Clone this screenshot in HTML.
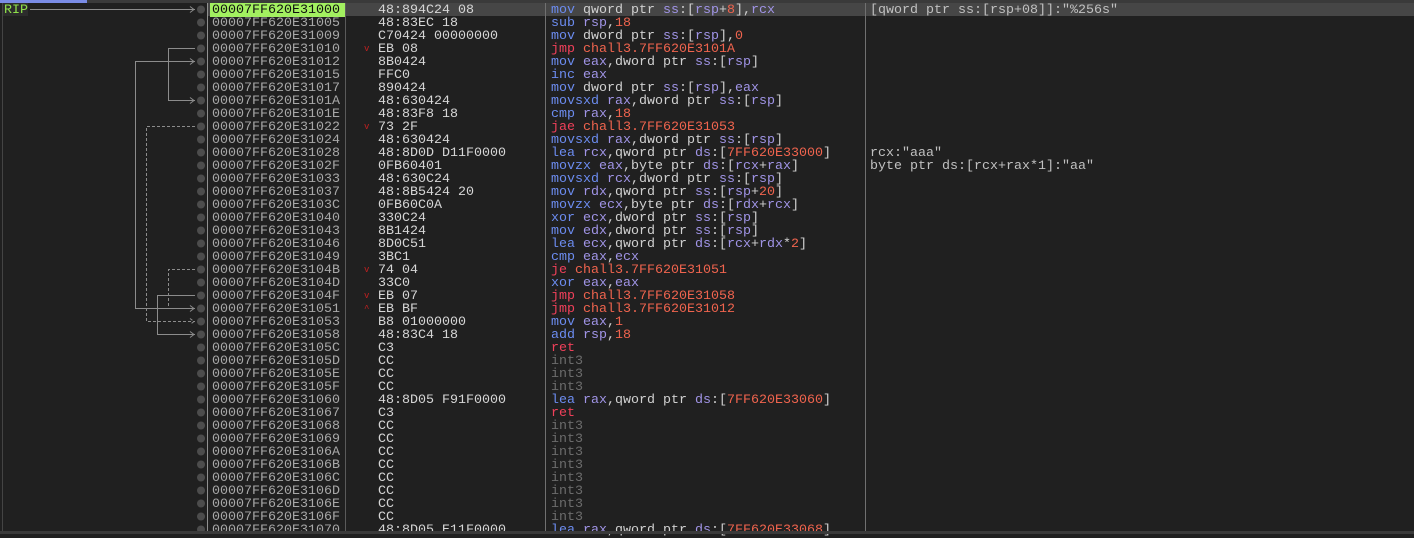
<!DOCTYPE html>
<html><head><meta charset="utf-8"><style>
*{margin:0;padding:0;box-sizing:border-box}
body{width:1414px;height:534px;background:#202020;overflow:hidden;position:relative;font-family:"Liberation Mono",monospace;font-size:13.33px;}
.row{position:absolute;left:0;width:1414px;height:13px;line-height:13px;white-space:pre}
.row>span{top:1px}
.a{position:absolute;left:212px;color:#a8a8a8}
.b{position:absolute;left:378px;color:#d6d6d6}
.d{position:absolute;left:551px;color:#d0d0d0}
.c{position:absolute;left:870px;color:#c0c0c0}
.mk{position:absolute;left:364px;color:#c02020;font-size:9px}
.m{color:#6c8cf0}.r{color:#a094e6}.n{color:#f0644e}.j{color:#f0405a}.i{color:#6c6c6c}.p{color:#d0d0d0}
.vl{position:absolute;top:3px;width:1px;height:529px;background:#5a5a5a}
</style></head><body>
<div style="position:absolute;left:0;top:0;width:1414px;height:3px;background:#3a3a3a"></div>
<div style="position:absolute;left:0;top:0;width:87px;height:3px;background:#7a8ce6"></div>
<div style="position:absolute;left:0;top:3px;width:1414px;height:13px;background:#464646"></div>
<div style="position:absolute;left:0;top:3px;width:207px;height:13px;background:#202020"></div>
<div style="position:absolute;left:3px;top:3px;width:25px;height:13px;background:#2c2c2c"></div>
<div style="position:absolute;left:210px;top:3px;width:135px;height:14px;background:#a2f060"></div>
<div class="vl" style="left:2px;background:#444"></div>
<div class="vl" style="left:207px;background:#909090"></div>
<div class="vl" style="left:345px"></div>
<div class="vl" style="left:545px;background:#707070"></div>
<div class="vl" style="left:865px;background:#707070"></div>
<div class="row" style="top:3px"><span style="position:absolute;left:4px;color:#8ee04a">RIP</span></div>
<svg width="207" height="534" style="position:absolute;left:0;top:0" fill="none" stroke="#8c8c8c" stroke-width="1">
<path d="M30 9.5H195M190 6.5l4 3-4 3"/>
<path d="M195 48.5H168.5V100.5H195M190 97.5l4 3-4 3"/>
<path d="M195 308.5H135.5V61.5H195M190 58.5l4 3-4 3M190 305.5l4 3-4 3"/>
<path d="M195 126.5H146.5V321.5H195M190 318.5l4 3-4 3" stroke-dasharray="3,2"/>
<path d="M195 269.5H168.5V308.5" stroke-dasharray="3,2"/>
<path d="M195 295.5H157.5V334.5H195M190 331.5l4 3-4 3"/>
</svg>
<svg width="10" height="534" style="position:absolute;left:197px;top:0">
<g fill="#4c4c4c">
<circle cx="4" cy="9.5" r="4"/><circle cx="4" cy="22.5" r="4"/><circle cx="4" cy="35.5" r="4"/><circle cx="4" cy="48.5" r="4"/><circle cx="4" cy="61.5" r="4"/><circle cx="4" cy="74.5" r="4"/><circle cx="4" cy="87.5" r="4"/><circle cx="4" cy="100.5" r="4"/><circle cx="4" cy="113.5" r="4"/><circle cx="4" cy="126.5" r="4"/><circle cx="4" cy="139.5" r="4"/><circle cx="4" cy="152.5" r="4"/><circle cx="4" cy="165.5" r="4"/><circle cx="4" cy="178.5" r="4"/><circle cx="4" cy="191.5" r="4"/><circle cx="4" cy="204.5" r="4"/><circle cx="4" cy="217.5" r="4"/><circle cx="4" cy="230.5" r="4"/><circle cx="4" cy="243.5" r="4"/><circle cx="4" cy="256.5" r="4"/><circle cx="4" cy="269.5" r="4"/><circle cx="4" cy="282.5" r="4"/><circle cx="4" cy="295.5" r="4"/><circle cx="4" cy="308.5" r="4"/><circle cx="4" cy="321.5" r="4"/><circle cx="4" cy="334.5" r="4"/><circle cx="4" cy="347.5" r="4"/><circle cx="4" cy="360.5" r="4"/><circle cx="4" cy="373.5" r="4"/><circle cx="4" cy="386.5" r="4"/><circle cx="4" cy="399.5" r="4"/><circle cx="4" cy="412.5" r="4"/><circle cx="4" cy="425.5" r="4"/><circle cx="4" cy="438.5" r="4"/><circle cx="4" cy="451.5" r="4"/><circle cx="4" cy="464.5" r="4"/><circle cx="4" cy="477.5" r="4"/><circle cx="4" cy="490.5" r="4"/><circle cx="4" cy="503.5" r="4"/><circle cx="4" cy="516.5" r="4"/><circle cx="4" cy="529.5" r="4"/>
</g></svg>

<div class="row" style="top:3px"><span class="a" style="color:#101010">00007FF620E31000</span><span class="b">48:894C24 08</span><span class="d"><span class="m">mov</span> qword ptr <span class="r">ss</span>:[<span class="r">rsp</span>+<span class="n">8</span>],<span class="r">rcx</span></span><span class="c">[qword ptr ss:[rsp+08]]:"%256s"</span></div>
<div class="row" style="top:16px"><span class="a">00007FF620E31005</span><span class="b">48:83EC 18</span><span class="d"><span class="m">sub</span> <span class="r">rsp</span>,<span class="n">18</span></span></div>
<div class="row" style="top:29px"><span class="a">00007FF620E31009</span><span class="b">C70424 00000000</span><span class="d"><span class="m">mov</span> dword ptr <span class="r">ss</span>:[<span class="r">rsp</span>],<span class="n">0</span></span></div>
<div class="row" style="top:42px"><span class="a">00007FF620E31010</span><span class="mk">v</span><span class="b">EB 08</span><span class="d"><span class="j">jmp</span> <span class="n">chall3.7FF620E3101A</span></span></div>
<div class="row" style="top:55px"><span class="a">00007FF620E31012</span><span class="b">8B0424</span><span class="d"><span class="m">mov</span> <span class="r">eax</span>,dword ptr <span class="r">ss</span>:[<span class="r">rsp</span>]</span></div>
<div class="row" style="top:68px"><span class="a">00007FF620E31015</span><span class="b">FFC0</span><span class="d"><span class="m">inc</span> <span class="r">eax</span></span></div>
<div class="row" style="top:81px"><span class="a">00007FF620E31017</span><span class="b">890424</span><span class="d"><span class="m">mov</span> dword ptr <span class="r">ss</span>:[<span class="r">rsp</span>],<span class="r">eax</span></span></div>
<div class="row" style="top:94px"><span class="a">00007FF620E3101A</span><span class="b">48:630424</span><span class="d"><span class="m">movsxd</span> <span class="r">rax</span>,dword ptr <span class="r">ss</span>:[<span class="r">rsp</span>]</span></div>
<div class="row" style="top:107px"><span class="a">00007FF620E3101E</span><span class="b">48:83F8 18</span><span class="d"><span class="m">cmp</span> <span class="r">rax</span>,<span class="n">18</span></span></div>
<div class="row" style="top:120px"><span class="a">00007FF620E31022</span><span class="mk">v</span><span class="b">73 2F</span><span class="d"><span class="j">jae</span> <span class="n">chall3.7FF620E31053</span></span></div>
<div class="row" style="top:133px"><span class="a">00007FF620E31024</span><span class="b">48:630424</span><span class="d"><span class="m">movsxd</span> <span class="r">rax</span>,dword ptr <span class="r">ss</span>:[<span class="r">rsp</span>]</span></div>
<div class="row" style="top:146px"><span class="a">00007FF620E31028</span><span class="b">48:8D0D D11F0000</span><span class="d"><span class="m">lea</span> <span class="r">rcx</span>,qword ptr <span class="r">ds</span>:[<span class="n">7FF620E33000</span>]</span><span class="c">rcx:"aaa"</span></div>
<div class="row" style="top:159px"><span class="a">00007FF620E3102F</span><span class="b">0FB60401</span><span class="d"><span class="m">movzx</span> <span class="r">eax</span>,byte ptr <span class="r">ds</span>:[<span class="r">rcx</span>+<span class="r">rax</span>]</span><span class="c">byte ptr ds:[rcx+rax*1]:"aa"</span></div>
<div class="row" style="top:172px"><span class="a">00007FF620E31033</span><span class="b">48:630C24</span><span class="d"><span class="m">movsxd</span> <span class="r">rcx</span>,dword ptr <span class="r">ss</span>:[<span class="r">rsp</span>]</span></div>
<div class="row" style="top:185px"><span class="a">00007FF620E31037</span><span class="b">48:8B5424 20</span><span class="d"><span class="m">mov</span> <span class="r">rdx</span>,qword ptr <span class="r">ss</span>:[<span class="r">rsp</span>+<span class="n">20</span>]</span></div>
<div class="row" style="top:198px"><span class="a">00007FF620E3103C</span><span class="b">0FB60C0A</span><span class="d"><span class="m">movzx</span> <span class="r">ecx</span>,byte ptr <span class="r">ds</span>:[<span class="r">rdx</span>+<span class="r">rcx</span>]</span></div>
<div class="row" style="top:211px"><span class="a">00007FF620E31040</span><span class="b">330C24</span><span class="d"><span class="m">xor</span> <span class="r">ecx</span>,dword ptr <span class="r">ss</span>:[<span class="r">rsp</span>]</span></div>
<div class="row" style="top:224px"><span class="a">00007FF620E31043</span><span class="b">8B1424</span><span class="d"><span class="m">mov</span> <span class="r">edx</span>,dword ptr <span class="r">ss</span>:[<span class="r">rsp</span>]</span></div>
<div class="row" style="top:237px"><span class="a">00007FF620E31046</span><span class="b">8D0C51</span><span class="d"><span class="m">lea</span> <span class="r">ecx</span>,qword ptr <span class="r">ds</span>:[<span class="r">rcx</span>+<span class="r">rdx</span>*<span class="n">2</span>]</span></div>
<div class="row" style="top:250px"><span class="a">00007FF620E31049</span><span class="b">3BC1</span><span class="d"><span class="m">cmp</span> <span class="r">eax</span>,<span class="r">ecx</span></span></div>
<div class="row" style="top:263px"><span class="a">00007FF620E3104B</span><span class="mk">v</span><span class="b">74 04</span><span class="d"><span class="j">je</span> <span class="n">chall3.7FF620E31051</span></span></div>
<div class="row" style="top:276px"><span class="a">00007FF620E3104D</span><span class="b">33C0</span><span class="d"><span class="m">xor</span> <span class="r">eax</span>,<span class="r">eax</span></span></div>
<div class="row" style="top:289px"><span class="a">00007FF620E3104F</span><span class="mk">v</span><span class="b">EB 07</span><span class="d"><span class="j">jmp</span> <span class="n">chall3.7FF620E31058</span></span></div>
<div class="row" style="top:302px"><span class="a">00007FF620E31051</span><span class="mk">^</span><span class="b">EB BF</span><span class="d"><span class="j">jmp</span> <span class="n">chall3.7FF620E31012</span></span></div>
<div class="row" style="top:315px"><span class="a">00007FF620E31053</span><span class="b">B8 01000000</span><span class="d"><span class="m">mov</span> <span class="r">eax</span>,<span class="n">1</span></span></div>
<div class="row" style="top:328px"><span class="a">00007FF620E31058</span><span class="b">48:83C4 18</span><span class="d"><span class="m">add</span> <span class="r">rsp</span>,<span class="n">18</span></span></div>
<div class="row" style="top:341px"><span class="a">00007FF620E3105C</span><span class="b">C3</span><span class="d"><span class="j">ret</span></span></div>
<div class="row" style="top:354px"><span class="a">00007FF620E3105D</span><span class="b">CC</span><span class="d"><span class="i">int3</span></span></div>
<div class="row" style="top:367px"><span class="a">00007FF620E3105E</span><span class="b">CC</span><span class="d"><span class="i">int3</span></span></div>
<div class="row" style="top:380px"><span class="a">00007FF620E3105F</span><span class="b">CC</span><span class="d"><span class="i">int3</span></span></div>
<div class="row" style="top:393px"><span class="a">00007FF620E31060</span><span class="b">48:8D05 F91F0000</span><span class="d"><span class="m">lea</span> <span class="r">rax</span>,qword ptr <span class="r">ds</span>:[<span class="n">7FF620E33060</span>]</span></div>
<div class="row" style="top:406px"><span class="a">00007FF620E31067</span><span class="b">C3</span><span class="d"><span class="j">ret</span></span></div>
<div class="row" style="top:419px"><span class="a">00007FF620E31068</span><span class="b">CC</span><span class="d"><span class="i">int3</span></span></div>
<div class="row" style="top:432px"><span class="a">00007FF620E31069</span><span class="b">CC</span><span class="d"><span class="i">int3</span></span></div>
<div class="row" style="top:445px"><span class="a">00007FF620E3106A</span><span class="b">CC</span><span class="d"><span class="i">int3</span></span></div>
<div class="row" style="top:458px"><span class="a">00007FF620E3106B</span><span class="b">CC</span><span class="d"><span class="i">int3</span></span></div>
<div class="row" style="top:471px"><span class="a">00007FF620E3106C</span><span class="b">CC</span><span class="d"><span class="i">int3</span></span></div>
<div class="row" style="top:484px"><span class="a">00007FF620E3106D</span><span class="b">CC</span><span class="d"><span class="i">int3</span></span></div>
<div class="row" style="top:497px"><span class="a">00007FF620E3106E</span><span class="b">CC</span><span class="d"><span class="i">int3</span></span></div>
<div class="row" style="top:510px"><span class="a">00007FF620E3106F</span><span class="b">CC</span><span class="d"><span class="i">int3</span></span></div>
<div class="row" style="top:523px"><span class="a">00007FF620E31070</span><span class="b">48:8D05 E11F0000</span><span class="d"><span class="m">lea</span> <span class="r">rax</span>,qword ptr <span class="r">ds</span>:[<span class="n">7FF620E33068</span>]</span></div>
<div style="position:absolute;left:0;top:531px;width:1414px;height:3px;background:#3a3a3a"></div>
</body></html>
